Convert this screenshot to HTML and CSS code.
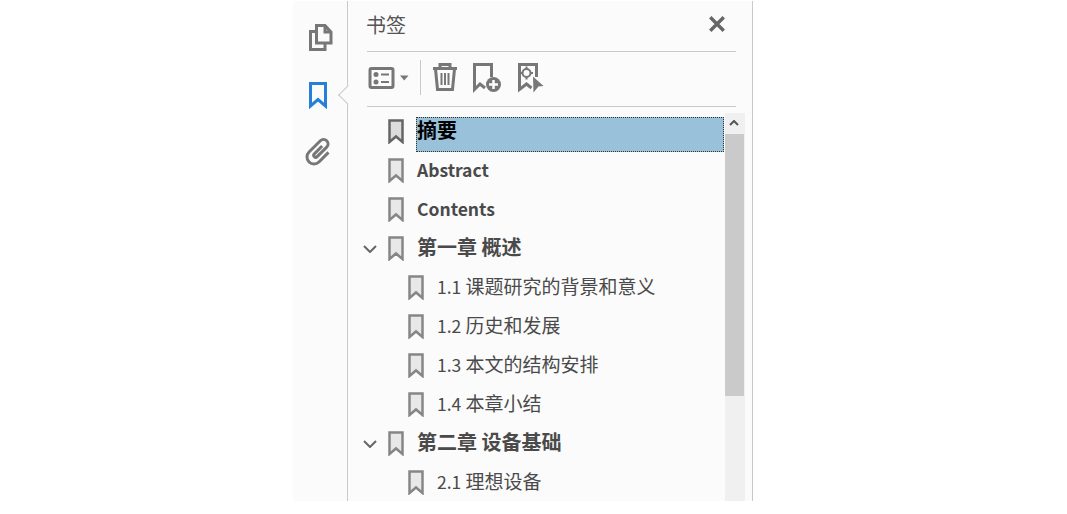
FILE: index.html
```html
<!DOCTYPE html>
<html lang="zh">
<head>
<meta charset="utf-8">
<title>书签</title>
<link rel="stylesheet" href="styles.css">
</head>
<body>
<svg class="defs" width="0" height="0" aria-hidden="true">
  <symbol id="bm" viewBox="0 0 16 25"><path d="M1.500 1.500H14.500V23L8 17.500 1.500 23Z"/></symbol>
  <symbol id="chev" viewBox="0 0 14 8"><path d="M1 1l6 6 6-6"/></symbol>
</svg>
<div class="app">
  <nav class="rail">
    <svg class="rail-icon" viewBox="0 0 30 30"><path d="M11.500 3.500H20l6 6.500V21H11.500ZM20 3.500V10h6M11.500 9.500H5.500V27.500H20V21"/></svg>
    <svg class="rail-icon active" viewBox="0 0 30 30"><path d="M5.500 4.500H20.500V27L13 20.500 5.500 27Z"/></svg>
    <svg class="rail-icon" viewBox="0 0 30 30"><g transform="rotate(45 15 15)"><path d="M22 10V23.500a7 7 0 0 1-14 0V7.500a4.500 4.500 0 0 1 9 0V21a2 2 0 0 1-4 0V10"/></g></svg>
    <span class="notch"></span>
  </nav>
  <section class="panel">
    <header class="head">
      <span class="title">书签</span>
      <svg class="close" viewBox="0 0 16 16"><path d="M2 2L14 14M14 2L2 14"/></svg>
    </header>
    <div class="toolbar">
      <svg class="tool w44" viewBox="0 0 44 36"><rect x="3" y="8.500" width="23" height="19" rx="1.500"/><path class="thin" d="M14 14.500h8M14 22h8"/><circle class="solid" cx="9" cy="14.500" r="2.500"/><circle class="solid" cx="9" cy="22" r="2.500"/><path class="solid" d="M33 15.500h8.500l-4.250 5z"/></svg>
      <span class="divider"></span>
      <svg class="tool w30 trash" viewBox="0 0 30 36"><path d="M3 8.500H27M10 8V4.500H20V8M5.500 9L7.500 29.500H22.500L24.500 9"/><path class="thin" d="M11.500 13V25M15 13V25M18.500 13V25"/></svg>
      <svg class="tool w32 add" viewBox="0 0 32 36"><path d="M14 28L9 24 3.500 29.500V4.500H20.500V17"/><circle class="solid" cx="22.500" cy="24.500" r="7.500"/><path class="plus" d="M18 24.500h9M22.500 20v9"/></svg>
      <svg class="tool w30 locate" viewBox="0 0 30 36"><path d="M20.500 17V4.500H3.500V29.500L10.500 24l5 4"/><circle class="thin" cx="10.500" cy="13" r="4"/><path class="thin" d="M10.500 6.500v2.500M10.500 17v2.500M4 13h2.500M14.500 13h2.500"/><path class="solid" d="M17 16.500l10.500 9.500-5 .5-5 6z"/></svg>
    </div>
    <div class="tree-wrap">
      <ul class="tree">
        <li class="row top current"><span class="twist"></span><svg class="bm"><use href="#bm"/></svg><span class="label">摘要</span></li>
        <li class="row top"><span class="twist"></span><svg class="bm"><use href="#bm"/></svg><span class="label latin">Abstract</span></li>
        <li class="row top"><span class="twist"></span><svg class="bm"><use href="#bm"/></svg><span class="label latin">Contents</span></li>
        <li class="row top"><svg class="twist"><use href="#chev"/></svg><svg class="bm"><use href="#bm"/></svg><span class="label">第一章 概述</span></li>
        <li class="row sub"><svg class="bm"><use href="#bm"/></svg><span class="label"><span class="num">1.1</span> 课题研究的背景和意义</span></li>
        <li class="row sub"><svg class="bm"><use href="#bm"/></svg><span class="label"><span class="num">1.2</span> 历史和发展</span></li>
        <li class="row sub"><svg class="bm"><use href="#bm"/></svg><span class="label"><span class="num">1.3</span> 本文的结构安排</span></li>
        <li class="row sub"><svg class="bm"><use href="#bm"/></svg><span class="label"><span class="num">1.4</span> 本章小结</span></li>
        <li class="row top"><svg class="twist"><use href="#chev"/></svg><svg class="bm"><use href="#bm"/></svg><span class="label">第二章 设备基础</span></li>
        <li class="row sub"><svg class="bm"><use href="#bm"/></svg><span class="label"><span class="num">2.1</span> 理想设备</span></li>
      </ul>
      <div class="scrollbar">
        <div class="scroll-up"><svg viewBox="0 0 10 6"><path d="M1 5l4-4 4 4"/></svg></div>
        <div class="thumb"></div>
      </div>
    </div>
  </section>
</div>
</body>
</html>
```

FILE: styles.css
```css
* { box-sizing: border-box; }
html, body { margin: 0; padding: 0; background: #fff; }
body { font-family: "Noto Sans CJK SC", "Noto Sans", sans-serif; overflow: hidden; height: 514px; padding-top: 1px; }
.defs { position: absolute; }
.app { margin-left: 293px; width: 460px; height: 500px; display: flex; background: #fbfbfb; border-right: 1px solid #c9c9c9; overflow: hidden; }

.rail { position: relative; width: 55px; flex: none; border-right: 1px solid #c9c9c9; padding: 21px 0 0 12px; display: flex; flex-direction: column; gap: 27px; }
.rail-icon { width: 30px; height: 30px; fill: none; stroke: #777; stroke-width: 3; }
.rail-icon.active { stroke: #2680d6; }
.notch { position: absolute; left: 47.500px; top: 87px; width: 14px; height: 14px; background: #fbfbfb; border-left: 1px solid #c9c9c9; border-bottom: 1px solid #c9c9c9; transform: rotate(45deg); }

.panel { flex: 1; min-width: 0; padding: 0 16px 0 19px; display: flex; flex-direction: column; }
.head { height: 51px; flex: none; border-bottom: 1px solid #c9c9c9; display: flex; justify-content: space-between; padding-right: 11px; }
.title { font-size: 20px; line-height: 48px; color: #555; margin-left: -1px; }
.close { width: 18px; height: 18px; margin: 14px -1px 0 0; fill: none; stroke: #666; stroke-width: 3; }

.toolbar { height: 55px; flex: none; border-bottom: 1px solid #c9c9c9; padding-top: 8px; display: flex; align-items: flex-start; }
.tool { height: 36px; flex: none; fill: none; stroke: #777; stroke-width: 3; }
.w44 { width: 44px; }
.w30 { width: 30px; }
.w32 { width: 32px; }
.tool .thin { stroke-width: 2; }
.tool .solid { fill: #777; stroke: none; }
.tool .plus { stroke: #fbfbfb; stroke-width: 2.500; }
.divider { width: 1px; height: 35px; background: #c9c9c9; margin-left: 9px; }
.trash { margin-left: 9px; }
.add { margin-left: 11px; }
.locate { margin-left: 13px; }

.tree-wrap { flex: 1; min-height: 0; display: flex; margin: 0 -9px 0 -7px; }
.tree { list-style: none; margin: 0; padding: 5px 0 0; width: 365px; flex: none; }
.row { height: 39px; display: flex; align-items: center; color: #4a4a4a; font-size: 19px; }
.row.top { font-weight: 700; font-size: 20px; }
.row.sub { padding-left: 48px; font-weight: 400; }
.num { font-size: 17.500px; }
.twist { width: 14px; height: 8px; margin: 0 11px 0 3px; flex: none; fill: none; stroke: #666; stroke-width: 2; }
.bm { width: 16px; height: 25px; flex: none; fill: #e8e8e8; stroke: #868686; stroke-width: 2.500; }
.label { margin: 0 0 4px 13px; line-height: 35px; white-space: nowrap; }
.label.latin { font-size: 17.500px; margin-bottom: 2px; line-height: 37px; }
.current { align-items: flex-start; }
.current .twist { margin-top: 8px; }
.current .bm { margin-top: 7px; stroke: #666; fill: #ddd; }
.current .label { flex: 1; margin: 5px 1px 0 12px; height: 35px; padding-left: 0; line-height: 23px; color: #000; background: #99c1da; border: 1px dotted #333; }

.scrollbar { width: 20px; flex: none; margin: 6px 0 0 0; background: #f0f0f0; }
.scroll-up { height: 21px; display: flex; justify-content: center; padding: 7px 2px 0 0; }
.scroll-up svg { width: 10px; height: 6px; fill: none; stroke: #555; stroke-width: 2; }
.thumb { height: 262px; width: 19px; background: #cacaca; }
```
